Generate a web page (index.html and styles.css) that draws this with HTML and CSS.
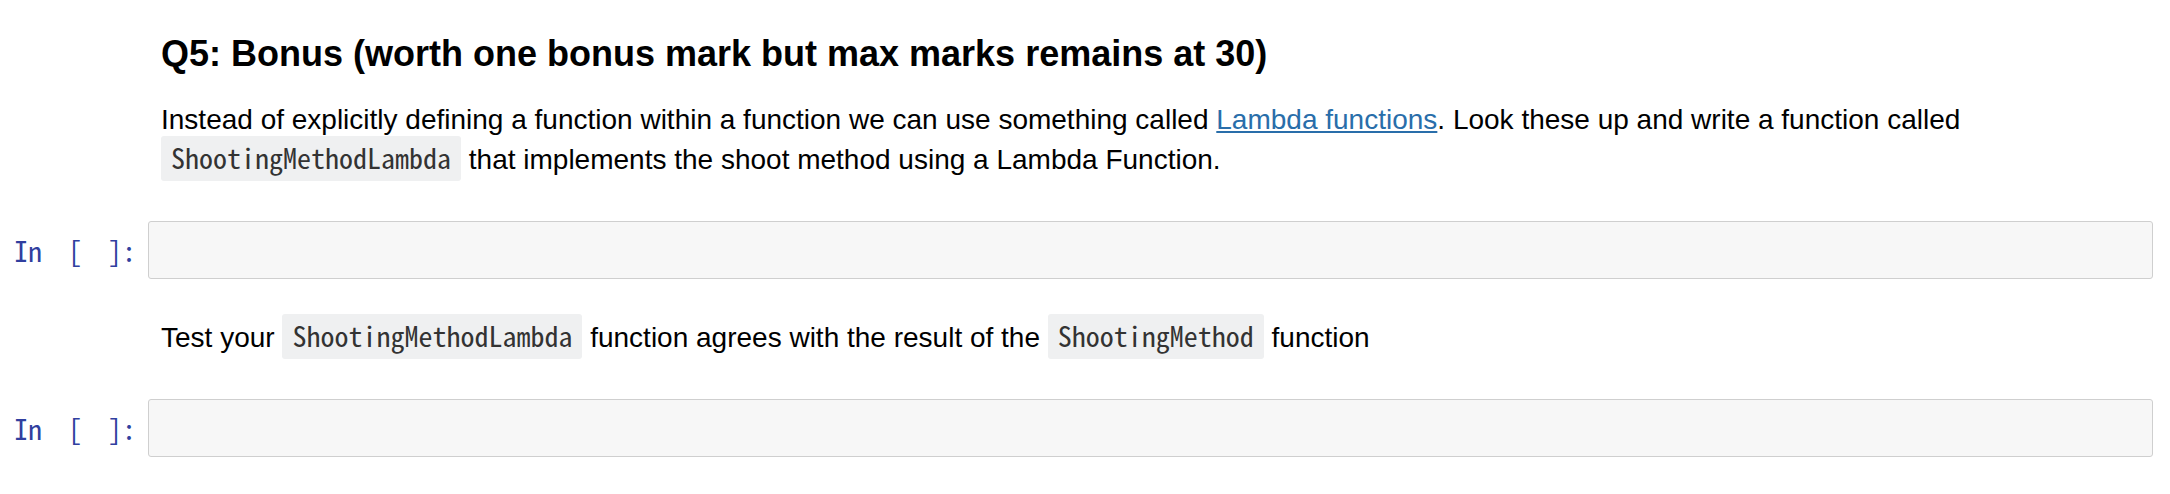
FILE: index.html
```html
<!DOCTYPE html>
<html>
<head>
<meta charset="utf-8">
<link rel="stylesheet" href="styles.css">
</head>
<body>
<div class="notebook">
  <div class="cell md first">
    <div class="prompt"></div>
    <div class="rendered">
      <h3 class="title">Q5: Bonus (worth one bonus mark but max marks remains at 30)</h3>
      <p class="para">Instead of explicitly defining a function within a function we can use something called <a class="link" href="#">Lambda functions</a>. Look these up and write a function called <code class="icode">ShootingMethodLambda</code> that implements the shoot method using a Lambda Function.</p>
    </div>
  </div>
  <div class="cell code">
    <div class="prompt in">In [ ]:</div>
    <div class="input"></div>
  </div>
  <div class="cell md">
    <div class="prompt"></div>
    <div class="rendered">
      <p class="para single">Test your <code class="icode">ShootingMethodLambda</code> function agrees with the result of the <code class="icode">ShootingMethod</code> function</p>
    </div>
  </div>
  <div class="cell code">
    <div class="prompt in">In [ ]:</div>
    <div class="input"></div>
  </div>
</div>
</body>
</html>
```

FILE: styles.css
```css
html, body {
  margin: 0;
  padding: 0;
  background: #ffffff;
}
body {
  font-family: "Liberation Sans", Arial, sans-serif;
  color: #000000;
}
.notebook {
  padding: 34px 17px 0 0;
  display: flex;
  flex-direction: column;
}
.cell {
  display: flex;
  flex-direction: row;
}
.cell.md + .cell.code {
  margin-top: 41px;
}
.cell.code + .cell.md {
  margin-top: 39px;
}
.prompt {
  width: 148px;
  flex: 0 0 148px;
  box-sizing: border-box;
  padding-right: 17px;
  text-align: right;
}
.prompt.in {
  font-family: "Noto Sans Mono CJK SC", "Liberation Mono", monospace;
  font-size: 28px;
  color: #303f9f;
  line-height: 58px;
  white-space: pre;
  word-spacing: 12px;
  padding-right: 12px;
}
.rendered {
  flex: 1 1 auto;
  padding-left: 13px;
  min-width: 0;
}
.title {
  margin: 0;
  font-size: 36px;
  font-weight: bold;
  line-height: 40px;
}
.para {
  margin: 26px 0 0 0;
  font-size: 28px;
  line-height: 40px;
}
.para.single {
  margin-top: 0;
}
.link {
  color: #296eaa;
  text-decoration: underline;
}
.icode {
  font-family: "Noto Sans Mono CJK SC", "Liberation Mono", monospace;
  font-size: 28px;
  line-height: 1;
  background: #eff0f1;
  color: #333333;
  padding: 1px 10px 4px 10px;
  border-radius: 3px;
}
.input {
  flex: 1 1 auto;
  height: 58px;
  box-sizing: border-box;
  background: #f7f7f7;
  border: 1px solid #cfcfcf;
  border-radius: 3px;
}
```
